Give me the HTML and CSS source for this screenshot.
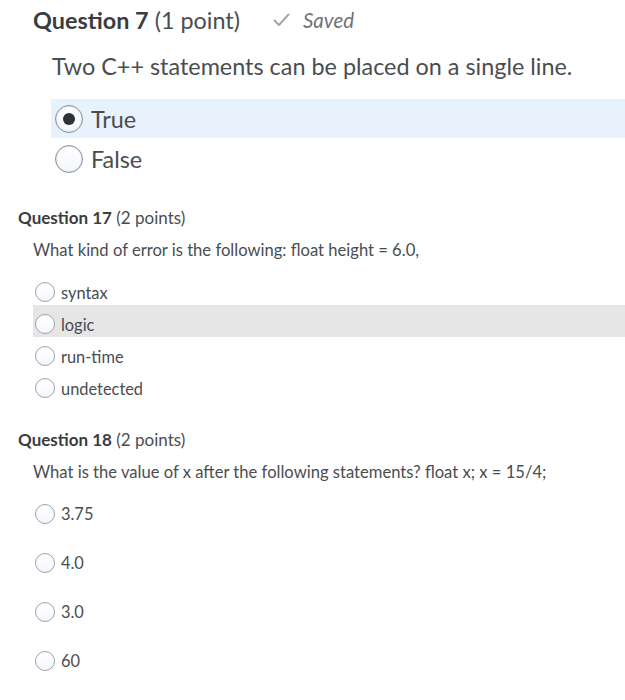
FILE: index.html
```html
<!DOCTYPE html>
<html lang="en">

<head>
    <meta charset="UTF-8">
    <meta name="viewport" content="width=device-width, initial-scale=1.0">
    <title>Quiz</title>
    <link rel="stylesheet" href="styles.css">
</head>

<body>
    <!-- Question 7 -->
    <div class="big-question">
        <h1 class="big-title">
            <span><b>Question 7</b> (1 point)</span>
            <span class="saved">
                <svg class="check" width="17" height="14" viewBox="0 0 17 14">
                    <polyline points="1.5,7.5 6,12 15.5,1.5" fill="none" stroke="#a3a7aa" stroke-width="2" stroke-linecap="round" stroke-linejoin="round" />
                </svg>
                Saved
            </span>
        </h1>
        <p class="big-text">Two C++ statements can be placed on a single line.</p>
        <div class="big-option selected">
            <span class="radio big checked"></span>
            <span>True</span>
        </div>
        <div class="big-option">
            <span class="radio big"></span>
            <span>False</span>
        </div>
    </div>

    <!-- Question 17 -->
    <div class="question">
        <h2 class="q-title"><b>Question 17</b> (2 points)</h2>
        <p class="q-text">What kind of error is the following: float height = 6.0,</p>
        <div class="options">
            <div class="option"><span class="radio"></span>syntax</div>
            <div class="option hover"><span class="radio"></span>logic</div>
            <div class="option"><span class="radio"></span>run-time</div>
            <div class="option"><span class="radio"></span>undetected</div>
        </div>
    </div>

    <!-- Question 18 -->
    <div class="question q18">
        <h2 class="q-title"><b>Question 18</b> (2 points)</h2>
        <p class="q-text">What is the value of x after the following statements? float x; x = 15/4;</p>
        <div class="options spaced">
            <div class="option"><span class="radio"></span>3.75</div>
            <div class="option"><span class="radio"></span>4.0</div>
            <div class="option"><span class="radio"></span>3.0</div>
            <div class="option"><span class="radio"></span>60</div>
        </div>
    </div>
</body>

</html>
```

FILE: styles.css
```css
body {
    margin: 0;
    font-family: Lato, "Open Sans", sans-serif;
    color: #4a4d50;
    background: #fff;
}

p,
h1,
h2 {
    margin: 0;
    font-weight: normal;
}

b {
    color: #3a3d3f;
}

.big-question {
    padding-left: 33px;
}

.big-title {
    display: flex;
    align-items: center;
    font-size: 23.4px;
    line-height: 28px;
    padding-top: 6px;
}

.saved {
    display: flex;
    align-items: center;
    margin-left: 33px;
    font-size: 20.5px;
    font-style: italic;
    color: #6e7376;
}

.check {
    margin-right: 13px;
}

.big-text {
    font-size: 23.4px;
    line-height: 28px;
    margin: 18px 0 0 19px;
}

.big-option {
    display: flex;
    align-items: center;
    gap: 8px;
    margin-left: 18px;
    padding-left: 4px;
    height: 39px;
    font-size: 23.4px;
}

.selected {
    margin-top: 19px;
    background-color: #e8f2fd;
}

.big-option + .big-option {
    margin-top: 1px;
}

.radio {
    box-sizing: border-box;
    flex: none;
    width: 20px;
    height: 20px;
    border: 1px solid #9ea3a6;
    border-radius: 50%;
    background: linear-gradient(#fff, #f3f6fb);
    display: inline-flex;
    align-items: center;
    justify-content: center;
}

.radio.big {
    width: 28px;
    height: 28px;
    border-color: #8d9194;
    box-shadow: inset 0 0 0 1px #e3e6ea;
}

.radio.checked::after {
    content: "";
    width: 12px;
    height: 12px;
    border-radius: 50%;
    background: #2f3133;
}

.question {
    margin-top: 29px;
    padding-left: 18px;
}

.q-title {
    font-size: 17px;
    line-height: 22px;
}

.q-text {
    font-size: 16.6px;
    line-height: 22px;
    margin: 10px 0 0 15px;
}

.options {
    margin-top: 12px;
    margin-left: 15px;
}

.option {
    box-sizing: border-box;
    display: flex;
    align-items: center;
    gap: 6px;
    height: 32px;
    padding-top: 6px;
    padding-left: 2px;
    font-size: 16.4px;
}

.hover {
    background-color: #e6e6e6;
}

.q18 {
    margin-top: 28px;
}

.spaced {
    margin-top: 6px;
}

.spaced .option {
    height: 49px;
    padding-top: 0;
}
```
